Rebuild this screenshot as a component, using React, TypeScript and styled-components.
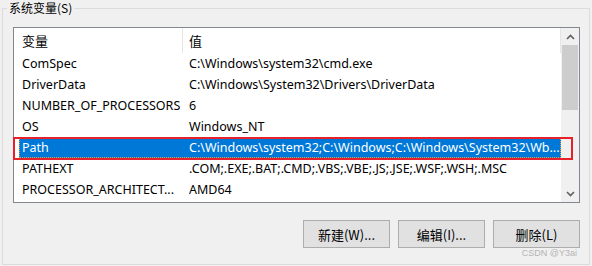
import React from "react";
import styled, { createGlobalStyle } from "styled-components";

const GlobalStyle = createGlobalStyle`
  html, body {
    margin: 0;
    padding: 0;
    background: #f0f0f0;
  }
  body {
    font-family: "Noto Sans", "Noto Sans CJK SC", sans-serif;
    font-size: 12.5px;
    color: #000;
  }
`;

const Page = styled.div`
  position: relative;
  width: 592px;
  height: 266px;
  background: #f0f0f0;
  overflow: hidden;
`;

const GroupBox = styled.fieldset`
  box-sizing: border-box;
  width: 588px;
  height: 265px;
  margin: 0 0 0 2px;
  padding: 11px 9px 16px 10px;
  border: 1px solid #dcdcdc;
  min-width: 0;
`;

const GroupLabel = styled.legend`
  margin-left: -6px;
  padding: 0 2px;
  font-size: 12px;
  line-height: 16px;
  font-family: "Noto Sans CJK SC", "Noto Sans", sans-serif;
`;

const ListBox = styled.div`
  position: relative;
  box-sizing: border-box;
  width: 567px;
  height: 176px;
  border: 1px solid #828790;
  background: #fff;
  display: flex;
`;

const Rows = styled.div`
  flex: 1;
  display: flex;
  flex-direction: column;
  min-width: 0;
`;

const HeaderRow = styled.div`
  display: grid;
  grid-template-columns: 169px 1fr;
  height: 25px;
  border-right: 1px solid #e5e5e5;
  font-family: "Noto Sans CJK SC", "Noto Sans", sans-serif;
`;

const HeaderCell = styled.div<{ $pad: number; $sep?: boolean }>`
  display: flex;
  align-items: center;
  padding-left: ${(p) => p.$pad}px;
  border-right: ${(p) => (p.$sep ? "1px solid #e5e5e5" : "none")};
  font-size: 13px;
`;

const Row = styled.div<{ $selected?: boolean }>`
  display: grid;
  grid-template-columns: ${(p) => (p.$selected ? "164px" : "169px")} 1fr;
  height: 21px;
  line-height: 21px;
  margin-left: ${(p) => (p.$selected ? "5px" : "0")};
  background: ${(p) => (p.$selected ? "#0078d7" : "transparent")};
  color: ${(p) => (p.$selected ? "#fff" : "#000")};
  outline: ${(p) => (p.$selected ? "1px dotted #e0a050" : "none")};
  outline-offset: -1px;
`;

const Cell = styled.div<{ $pad: number }>`
  padding-left: ${(p) => p.$pad}px;
  white-space: nowrap;
  overflow: hidden;
`;

const ScrollBar = styled.div`
  width: 18px;
  background: #f0f0f0;
  display: flex;
  flex-direction: column;
  align-items: center;
`;

const Arrow = styled.div`
  height: 17px;
  width: 100%;
  display: flex;
  align-items: center;
  justify-content: center;
`;

const Track = styled.div`
  flex: 1;
  width: 100%;
  display: flex;
  flex-direction: column;
  align-items: center;
`;

const Thumb = styled.div`
  width: 16px;
  height: 65px;
  background: #cdcdcd;
`;

const Highlight = styled.div`
  position: absolute;
  left: -1px;
  top: 109px;
  width: 560px;
  height: 23px;
  box-sizing: border-box;
  border: 2px solid #e8202a;
  pointer-events: none;
`;

const ButtonRow = styled.div`
  display: flex;
  justify-content: flex-end;
  gap: 8px;
  margin-top: 17px;
  width: 567px;
`;

const Button = styled.button`
  box-sizing: border-box;
  width: 87px;
  height: 28px;
  border: 1px solid #adadad;
  background: #e1e1e1;
  font-family: "Noto Sans CJK SC", "Noto Sans", sans-serif;
  font-size: 13px;
  color: #000;
  padding: 0;
`;

const Watermark = styled.div`
  position: absolute;
  right: 15px;
  top: 248px;
  font-family: "Liberation Sans", sans-serif;
  font-size: 9px;
  color: #b4b4b4;
`;

const Chevron = ({ up }: { up?: boolean }) => (
  <svg width="9" height="6" viewBox="0 0 9 6">
    <path
      d={up ? "M1 5 L4.5 1.5 L8 5" : "M1 1 L4.5 4.5 L8 1"}
      fill="none"
      stroke="#606060"
      strokeWidth="1.6"
    />
  </svg>
);

const vars = [
  ["ComSpec", "C:\\Windows\\system32\\cmd.exe"],
  ["DriverData", "C:\\Windows\\System32\\Drivers\\DriverData"],
  ["NUMBER_OF_PROCESSORS", "6"],
  ["OS", "Windows_NT"],
  ["Path", "C:\\Windows\\system32;C:\\Windows;C:\\Windows\\System32\\Wb..."],
  ["PATHEXT", ".COM;.EXE;.BAT;.CMD;.VBS;.VBE;.JS;.JSE;.WSF;.WSH;.MSC"],
  ["PROCESSOR_ARCHITECT...", "AMD64"],
];

export default function App() {
  return (
    <Page>
      <GlobalStyle />
      <GroupBox>
        <GroupLabel>系统变量(S)</GroupLabel>
        <ListBox>
          <Rows>
            <HeaderRow>
              <HeaderCell $pad={8} $sep>变量</HeaderCell>
              <HeaderCell $pad={6}>值</HeaderCell>
            </HeaderRow>
            {vars.map(([name, value]) => {
              const sel = name === "Path";
              return (
                <Row key={name} $selected={sel}>
                  <Cell $pad={sel ? 3 : 8}>{name}</Cell>
                  <Cell $pad={6}>{value}</Cell>
                </Row>
              );
            })}
          </Rows>
          <ScrollBar>
            <Arrow>
              <Chevron up />
            </Arrow>
            <Track>
              <Thumb />
            </Track>
            <Arrow>
              <Chevron />
            </Arrow>
          </ScrollBar>
          <Highlight />
        </ListBox>
        <ButtonRow>
          <Button>新建(W)...</Button>
          <Button>编辑(I)...</Button>
          <Button>删除(L)</Button>
        </ButtonRow>
      </GroupBox>
      <Watermark>CSDN @Y3ai</Watermark>
    </Page>
  );
}
